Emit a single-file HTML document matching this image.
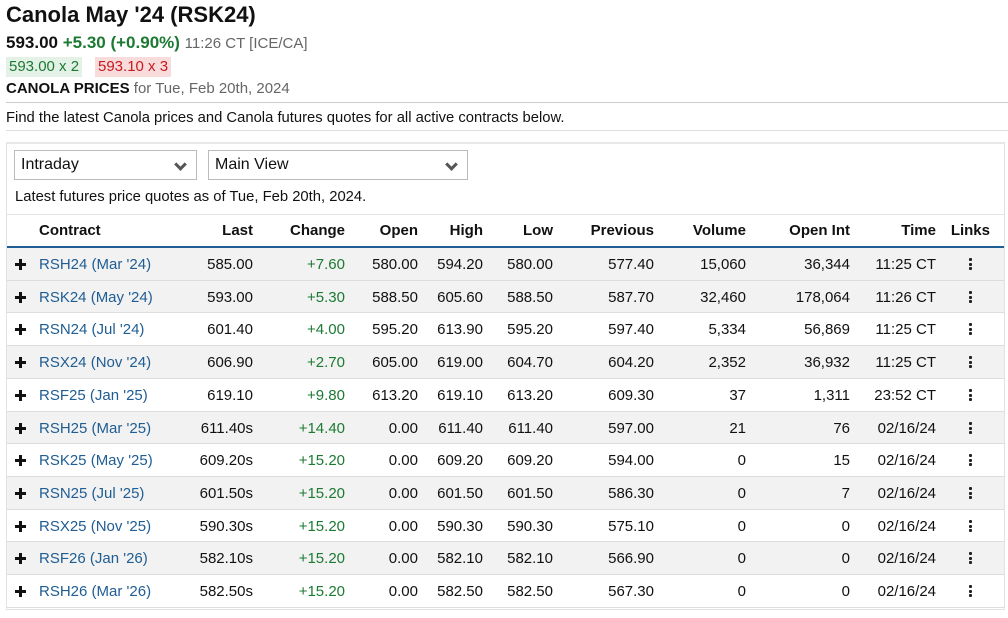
<!DOCTYPE html>
<html><head><meta charset="utf-8"><style>
*{margin:0;padding:0;box-sizing:border-box}
body{width:1008px;height:618px;background:#fff;font-family:"Liberation Sans",sans-serif;color:#111;position:relative;overflow:hidden}
.a{position:absolute;white-space:nowrap}
.g{color:#1c7a33}.gr{color:#666}
.box{position:absolute;left:6px;top:142px;width:999px;height:468px;border:1px solid #e2e2e2;border-top:2px solid #e8e8e8}
.sel{position:absolute;top:150px;height:30px;border:1px solid #bbb;font-size:16px;padding:5px 0 0 6px;background:#fff}
.sel:after{content:"";position:absolute;right:11px;top:9px;width:6px;height:6px;border-right:3px solid #555;border-bottom:3px solid #555;transform:rotate(45deg)}
.row{position:absolute;left:7px;width:997px;height:33px;border-bottom:1px solid #ddd;font-size:15px}
.row span{position:absolute;top:8px;white-space:nowrap}
.r{text-align:right}
.hd span{font-weight:bold;top:7px}
.lnk{color:#1f5d93}
.plus{width:11px;height:11px;top:11px!important}
.plus:before{content:"";position:absolute;left:4px;top:0;width:3px;height:11px;background:#111}
.plus:after{content:"";position:absolute;left:0;top:4px;width:11px;height:3px;background:#111}
.dots{width:3px;top:10px!important}
.dots i{display:block;width:3px;height:3px;background:#222;margin-bottom:1.5px;border-radius:1px}
</style></head><body>
<div class="a" style="left:6px;top:2px;font-size:22px;font-weight:bold">Canola May '24 (RSK24)</div>
<div class="a" style="left:6px;top:33px;font-size:17px"><b>593.00</b> <b class="g">+5.30 (+0.90%)</b> <span class="gr" style="font-size:15px">11:26 CT [ICE/CA]</span></div>
<div class="a" style="left:6px;top:57px;height:20px;padding:1px 3px;background:#e4f1e6;color:#1c7a33;font-size:15px">593.00 x 2</div>
<div class="a" style="left:95px;top:57px;height:20px;padding:1px 3px;background:#f8dcdc;color:#c8191e;font-size:15px">593.10 x 3</div>
<div class="a" style="left:6px;top:80px;font-size:15px"><b>CANOLA PRICES</b> <span class="gr">for Tue, Feb 20th, 2024</span></div>
<div class="a" style="left:6px;top:102px;width:1002px;border-top:1px solid #ccc"></div>
<div class="a" style="left:6px;top:110px;font-size:14.8px">Find the latest Canola prices and Canola futures quotes for all active contracts below.</div>
<div class="a" style="left:6px;top:130px;width:1002px;border-top:1px solid #ddd"></div>
<div class="box"></div>
<div class="sel" style="left:14px;width:183px">Intraday</div>
<div class="sel" style="left:208px;width:260px">Main View</div>
<div class="a" style="left:15px;top:189px;font-size:14.8px">Latest futures price quotes as of Tue, Feb 20th, 2024.</div>
<div class="a" style="left:7px;top:214px;width:997px;border-top:1px solid #e4e4e4"></div>
<div class="row hd" style="top:215px;border-bottom:2px solid #1f5d93">
<span style="left:32px">Contract</span>
<span class="r" style="right:751px">Last</span>
<span class="r" style="right:659px">Change</span>
<span class="r" style="right:586px">Open</span>
<span class="r" style="right:521px">High</span>
<span class="r" style="right:451px">Low</span>
<span class="r" style="right:350px">Previous</span>
<span class="r" style="right:258px">Volume</span>
<span class="r" style="right:154px">Open Int</span>
<span class="r" style="right:68px">Time</span>
<span class="r" style="right:14px">Links</span>
</div>
<div id="rows"></div>
<script>
var d=[
["RSH24 (Mar '24)","585.00","+7.60","580.00","594.20","580.00","577.40","15,060","36,344","11:25 CT"],
["RSK24 (May '24)","593.00","+5.30","588.50","605.60","588.50","587.70","32,460","178,064","11:26 CT"],
["RSN24 (Jul '24)","601.40","+4.00","595.20","613.90","595.20","597.40","5,334","56,869","11:25 CT"],
["RSX24 (Nov '24)","606.90","+2.70","605.00","619.00","604.70","604.20","2,352","36,932","11:25 CT"],
["RSF25 (Jan '25)","619.10","+9.80","613.20","619.10","613.20","609.30","37","1,311","23:52 CT"],
["RSH25 (Mar '25)","611.40s","+14.40","0.00","611.40","611.40","597.00","21","76","02/16/24"],
["RSK25 (May '25)","609.20s","+15.20","0.00","609.20","609.20","594.00","0","15","02/16/24"],
["RSN25 (Jul '25)","601.50s","+15.20","0.00","601.50","601.50","586.30","0","7","02/16/24"],
["RSX25 (Nov '25)","590.30s","+15.20","0.00","590.30","590.30","575.10","0","0","02/16/24"],
["RSF26 (Jan '26)","582.10s","+15.20","0.00","582.10","582.10","566.90","0","0","02/16/24"],
["RSH26 (Mar '26)","582.50s","+15.20","0.00","582.50","582.50","567.30","0","0","02/16/24"]];
var R=[751,659,586,521,451,350,258,154,68],h="";
d.forEach(function(r,i){
var bg=(i%2==1||i==0)?"#f2f2f2":"#fff";
var t=Math.round(248+i*32.7),t2=Math.round(248+(i+1)*32.7);
h+='<div class="row" style="top:'+t+'px;height:'+(t2-t)+'px;background:'+bg+'"><span class="plus" style="left:8px"></span><span class="lnk" style="left:32px">'+r[0]+'</span>';
for(var j=1;j<10;j++)h+='<span class="r'+(j==2?' g':'')+'" style="right:'+R[j-1]+'px">'+r[j]+'</span>';
h+='<span class="dots" style="left:962px"><i></i><i></i><i></i></span></div>';});
document.getElementById("rows").innerHTML=h;
</script>
</body></html>
